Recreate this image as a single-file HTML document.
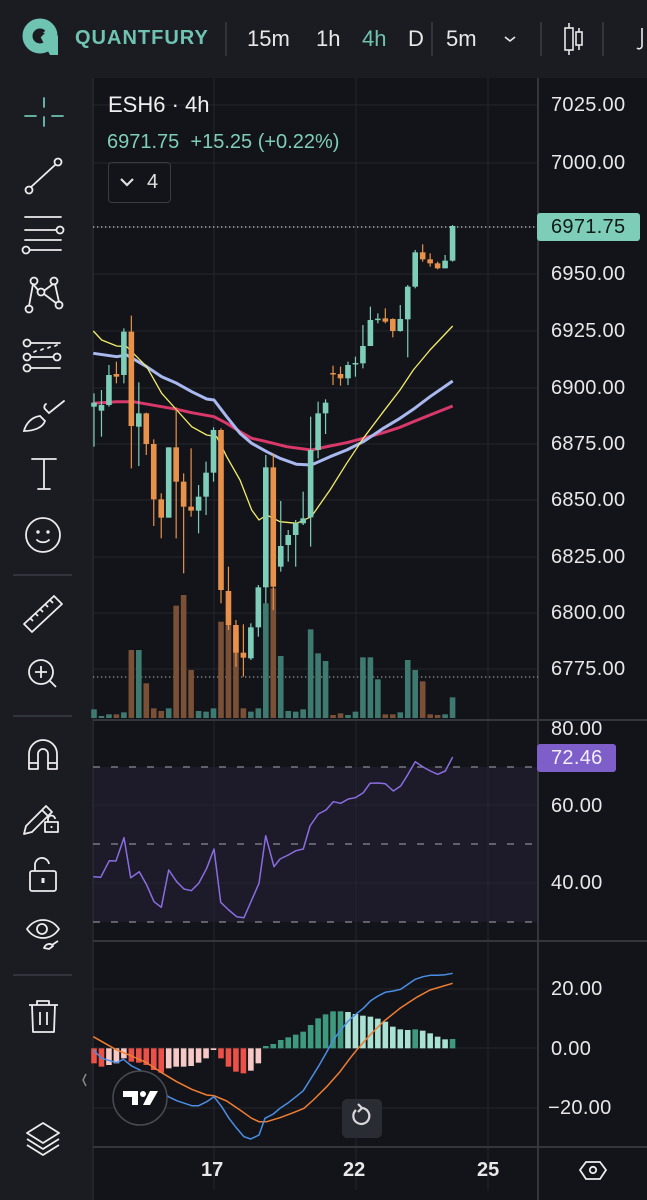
<!DOCTYPE html>
<html><head><meta charset="utf-8"><style>
*{margin:0;padding:0;box-sizing:border-box}
body{width:647px;height:1200px;background:#131419;overflow:hidden;font-family:"Liberation Sans",sans-serif;color:#e8e8ea;position:relative}
.hdr{position:absolute;left:0;top:0;width:647px;height:78px;background:#1b1c22}
.tb{position:absolute;left:0;top:78px;width:92px;height:1122px;background:#1b1c22}
.t{position:absolute;white-space:nowrap}
.ax{font-size:20px;color:#e8e8ea;position:absolute;left:551px;letter-spacing:0.3px}
svg{position:absolute;left:0;top:0}
</style></head><body>
<div class="hdr"></div>
<div class="tb"></div>
<svg id="s" width="647" height="1200" viewBox="0 0 647 1200"></svg>
<div class="t" style="left:75px;top:27px;font-size:20px;font-weight:bold;color:#6fc3b1;letter-spacing:1px">QUANTFURY</div>
<div class="t" style="left:247px;top:26px;font-size:22px;color:#e8e8ea">15m</div>
<div class="t" style="left:316px;top:26px;font-size:22px;color:#e8e8ea">1h</div>
<div class="t" style="left:362px;top:26px;font-size:22px;color:#6fc3b1">4h</div>
<div class="t" style="left:408px;top:26px;font-size:22px;color:#e8e8ea">D</div>
<div class="t" style="left:446px;top:26px;font-size:22px;color:#e8e8ea">5m</div>
<div class="t" style="left:108px;top:92px;font-size:22px;color:#f0f0f2">ESH6 · 4h</div>
<div class="t" style="left:107px;top:131px;font-size:20px;color:#7ecdb9">6971.75 &nbsp;+15.25 (+0.22%)</div>
<div class="t" style="left:108px;top:162px;width:63px;height:41px;border:1px solid #3a3c44;border-radius:4px"></div>
<div class="t" style="left:147px;top:171px;font-size:20px;color:#e0e0e2">4</div>
<div class="ax" style="top:94px">7025.00</div>
<div class="ax" style="top:152px">7000.00</div>
<div class="ax" style="top:263px">6950.00</div>
<div class="ax" style="top:320px">6925.00</div>
<div class="ax" style="top:377px">6900.00</div>
<div class="ax" style="top:433px">6875.00</div>
<div class="ax" style="top:489px">6850.00</div>
<div class="ax" style="top:546px">6825.00</div>
<div class="ax" style="top:602px">6800.00</div>
<div class="ax" style="top:658px">6775.00</div>
<div class="t" style="left:537px;top:213px;width:103px;height:28px;background:#7ecdb9;border-radius:3px;color:#0f1a17;font-size:20px;padding:3px 0 0 14px;letter-spacing:0.3px">6971.75</div>
<div class="ax" style="top:718px">80.00</div>
<div class="t" style="left:537px;top:744px;width:79px;height:28px;background:#7e5fc9;border-radius:3px;color:#f2eefa;font-size:20px;padding:3px 0 0 14px;letter-spacing:0.3px">72.46</div>
<div class="ax" style="top:795px">60.00</div>
<div class="ax" style="top:872px">40.00</div>
<div class="ax" style="top:978px">20.00</div>
<div class="ax" style="top:1038px">0.00</div>
<div class="ax" style="top:1097px;left:548px">−20.00</div>
<div class="t" style="left:201px;top:1159px;font-size:20px;font-weight:bold">17</div>
<div class="t" style="left:343px;top:1159px;font-size:20px;font-weight:bold">22</div>
<div class="t" style="left:477px;top:1159px;font-size:20px;font-weight:bold">25</div>
<script>
const s=document.getElementById('s');let h='';
const X0=80,Y0=220;
h+='<rect x="93" y="78" width="445" height="1069" fill="#131419"/>';
h+='<rect x="93" y="767" width="445" height="155" fill="#1d1a2a"/>';
const gl=[105,163,227,274,331,388,444,500,557,613,669,805,883,989,1048,1108];
gl.forEach(y=>h+=`<line x1="93" x2="538" y1="${y}" y2="${y}" stroke="#24262d" stroke-width="1"/>`);
[214,356,488].forEach(x=>h+=`<line x1="${x}" x2="${x}" y1="78" y2="1190" stroke="#24262d"/>`);
h+='<line x1="93" x2="647" y1="720" y2="720" stroke="#34363d" stroke-width="2"/>';
h+='<line x1="93" x2="647" y1="941" y2="941" stroke="#34363d" stroke-width="2"/>';
h+='<line x1="93" x2="647" y1="1147" y2="1147" stroke="#34363d" stroke-width="2"/>';
h+='<line x1="538" x2="538" y1="78" y2="1200" stroke="#34363d" stroke-width="2"/>';
h+='<line x1="93" x2="93" y1="78" y2="1200" stroke="#34363d" stroke-width="1"/>';
[767,844,922].forEach(y=>h+=`<line x1="93" x2="538" y1="${y}" y2="${y}" stroke="#8a8a94" stroke-width="1.3" stroke-dasharray="7,11"/>`);
h+='<line x1="93" x2="538" y1="227" y2="227" stroke="#c8c8cc" stroke-width="1.3" stroke-dasharray="1.3,2.7"/>';
h+='<line x1="93" x2="538" y1="677" y2="677" stroke="#9a9aa0" stroke-width="1.3" stroke-dasharray="1.3,2.7"/>';
const G='#7ecdb9',O='#e8914a';
const xs=i=>94+i*7.47;
const vol=[[1468,'g'],[1488,'g'],[1483,'g'],[1483,'o'],[1477,'g'],[1290,'o'],[1290,'g'],[1390,'o'],[1465,'o'],[1473,'o'],[1465,'g'],[1157,'o'],[1125,'o'],[1350,'o'],[1473,'g'],[1475,'g'],[1465,'g'],[1205,'o'],[1213,'o'],[1238,'o'],[1465,'o'],[1475,'g'],[1465,'g'],[1150,'g'],[1105,'o'],[1308,'g'],[1473,'g'],[1475,'g'],[1468,'g'],[1228,'g'],[1300,'g'],[1323,'g'],[1485,'o'],[1480,'o'],[1485,'g'],[1475,'g'],[1312,'g'],[1312,'g'],[1378,'g'],[1483,'o'],[1483,'o'],[1477,'g'],[1320,'g'],[1350,'g'],[1384,'o'],[1483,'o'],[1485,'o'],[1483,'g'],[1432,'g']];
vol.forEach((v,i)=>{const y=Y0+v[0]/3;h+=`<rect x="${xs(i)-2.8}" y="${y}" width="5.6" height="${718-y}" fill="${v[1]=='g'?'#3f7a70':'#7a5036'}"/>`});
const pl=(pts,c,w,ox,oy)=>'<polyline fill="none" stroke="'+c+'" stroke-width="'+w+'" stroke-linejoin="round" points="'+pts.map(p=>(ox+p[0]/3).toFixed(1)+','+(oy+p[1]/3).toFixed(1)).join(' ')+'"/>';
h+=pl([[40,550],[110,545],[160,545],[245,560],[290,568],[335,578],[402,590],[440,610],[480,635],[515,655],[560,665],[620,680],[694,690],[750,678],[800,668],[850,655],[910,638],[960,622],[1000,605],[1050,585],[1118,558]],'#d8386a',3,X0,Y0);
h+=pl([[40,400],[110,410],[140,405],[200,440],[245,470],[290,490],[335,515],[380,537],[402,540],[440,590],[480,640],[515,670],[560,695],[600,715],[650,733],[694,735],[750,710],[800,690],[850,665],[910,625],[960,595],[1000,568],[1050,530],[1118,483]],'#a9b9f0',3,X0,Y0);
h+=pl([[40,333],[65,360],[110,378],[140,380],[200,440],[245,520],[290,570],[335,620],[380,645],[410,650],[440,710],[480,780],[515,870],[537,900],[560,885],[600,905],[650,910],[694,890],[750,810],[800,730],[850,655],[910,575],[960,510],[1000,450],[1050,390],[1118,318]],'#f2ec6a',1.3,X0,Y0);
const c=[['g',548,560,520,680],['g',555,572,510,650],['g',465,555,435,560],['o',462,470,425,490],['g',335,465,325,490],['o',335,618,287,745],['g',580,620,487,738],['o',580,672,578,705],['o',672,838,658,918],['o',838,893,820,955],['g',682,893,682,893],['o',682,785,562,955],['o',785,860,760,1060],['o',860,872,685,890],['g',830,872,795,940],['g',758,830,725,885],['g',630,758,622,785],['o',630,1110,625,1150],['o',1113,1215,1040,1230],['o',1215,1298,1200,1340],['o',1298,1313,1213,1370],['g',1222,1315,1210,1320],['g',1102,1222,1095,1250],['g',742,1102,705,1150],['o',742,1100,700,1170],['g',978,1040,843,1055],['g',945,975,930,1025],['g',910,945,900,1040],['g',895,910,815,915],['g',690,892,590,980],['g',580,690,545,715],['g',548,580,538,642],['o',459,463,437,495],['o',462,475,440,497],['g',435,475,425,495],['g',429,433,410,470],['g',378,430,315,445],['g',300,378,260,378],['g',296,300,280,310],['o',295,305,265,310],['o',297,333,295,352],['g',297,333,255,335],['g',200,298,195,412],['g',97,200,90,205],['o',97,118,73,125],['o',118,130,100,140],['o',130,145,125,148],['g',122,145,105,145],['g',18,122,15,125]];
c.forEach((k,i)=>{const x=xs(i),col=k[0]=='g'?G:O;h+=`<line x1="${x}" x2="${x}" y1="${Y0+k[3]/3}" y2="${Y0+k[4]/3}" stroke="${col}" stroke-width="1.2"/>`;const t=Y0+k[1]/3,b=Y0+k[2]/3;h+=`<rect x="${x-2.8}" y="${t}" width="5.6" height="${Math.max(1.5,b-t)}" fill="${col}"/>`});
h+=pl([[40,485],[62,487],[88,437],[108,438],[132,368],[152,488],[178,470],[200,510],[222,560],[244,577],[266,465],[290,500],[312,522],[334,527],[356,505],[380,460],[402,402],[422,562],[446,585],[470,605],[492,608],[515,555],[537,505],[557,362],[582,455],[600,432],[625,420],[648,407],[670,402],[690,333],[715,297],[738,285],[760,260],[782,265],[805,252],[826,248],[850,233],[870,205],[894,204],[916,206],[940,228],[962,213],[984,178],[1006,140],[1029,156],[1051,168],[1073,178],[1096,168],[1118,126]],'#8a6ee0',1.5,X0,715);
const mh=[[370,'r'],[380,'r'],[375,'p'],[370,'p'],[355,'p'],[365,'r'],[368,'r'],[375,'r'],[390,'r'],[398,'r'],[385,'p'],[380,'p'],[380,'p'],[378,'p'],[368,'p'],[355,'p'],[330,'p'],[355,'r'],[380,'r'],[395,'r'],[400,'r'],[392,'p'],[370,'p'],[318,'g'],[312,'g'],[300,'g'],[292,'g'],[284,'g'],[275,'g'],[255,'g'],[235,'g'],[223,'g'],[214,'g'],[214,'g'],[216,'l'],[222,'l'],[227,'l'],[230,'l'],[236,'l'],[245,'l'],[260,'l'],[268,'l'],[270,'l'],[268,'g'],[272,'l'],[280,'l'],[290,'l'],[298,'l'],[297,'g']];
const mc={r:'#ec5148',p:'#f6c9c6',g:'#3e9a7f',l:'#a9e2d2'};
mh.forEach((m,i)=>{const y=940+m[0]/3,z=940+325/3;const t=Math.min(y,z),hh=Math.abs(y-z);h+=`<rect x="${xs(i)-2.8}" y="${t}" width="5.6" height="${hh}" fill="${mc[m[1]]}"/>`});
h+=pl([[40,290],[80,313],[110,330],[155,348],[200,368],[245,398],[290,425],[335,448],[380,465],[402,467],[440,483],[480,510],[515,535],[537,545],[560,545],[600,533],[640,518],[672,505],[700,480],[740,440],[780,395],[810,355],[830,330],[870,285],[910,245],[960,205],[1010,172],[1050,150],[1118,130]],'#f07e32',1.5,X0,940);
h+=pl([[40,330],[65,355],[110,368],[130,358],[155,378],[180,390],[220,425],[265,470],[290,482],[335,497],[356,497],[380,485],[402,470],[425,500],[447,535],[470,565],[492,590],[512,597],[537,585],[555,535],[580,522],[600,505],[625,488],[648,470],[670,452],[690,420],[715,380],[738,340],[760,300],[782,270],[805,243],[827,223],[850,205],[872,182],[894,168],[916,157],[940,153],[962,148],[984,133],[1006,118],[1029,110],[1051,106],[1073,106],[1096,104],[1118,100]],'#4a8ee6',1.5,X0,940);
h+='<circle cx="140" cy="1098" r="27" fill="#131419" stroke="#4a4c54" stroke-width="1.5"/>';
h+='<rect x="123" y="1091" width="15" height="6" fill="#fff"/><rect x="132" y="1091" width="6" height="14" fill="#fff"/><circle cx="143" cy="1094" r="3" fill="#fff"/><path d="M150 1091h8l-8 14h-7z" fill="#fff"/>';
h+='<rect x="342" y="1099" width="40" height="39" rx="5" fill="#2a2c33"/>';
h+='<path d="M356 1110 A8 8 0 1 0 362 1108" fill="none" stroke="#d8d8dc" stroke-width="2.2"/><path d="M358 1104l4 4-4 4" fill="none" stroke="#d8d8dc" stroke-width="2.2"/>';
h+='<circle cx="40" cy="36" r="12.5" fill="none" stroke="#6fc3b1" stroke-width="10"/><path d="M40 36L48 28L58 36L58 55L50 55z" fill="#6fc3b1"/><path d="M33 33h12l-6 6z" fill="#1b1c22"/>';
h+='<line x1="226" x2="226" y1="22" y2="56" stroke="#3a3c44" stroke-width="1.5"/><line x1="432" x2="432" y1="22" y2="56" stroke="#3a3c44" stroke-width="1.5"/><line x1="541" x2="541" y1="22" y2="56" stroke="#3a3c44" stroke-width="1.5"/><line x1="603" x2="603" y1="22" y2="56" stroke="#3a3c44" stroke-width="1.5"/>';
h+='<path d="M505 37l5 4 5-4" fill="none" stroke="#e8e8ea" stroke-width="1.6"/>';
h+='<g fill="none" stroke="#e8e8ea" stroke-width="1.6"><line x1="569" x2="569" y1="23" y2="55"/><rect x="565" y="28" width="8" height="22" fill="#1b1c22"/><line x1="579" x2="579" y1="28" y2="50"/><rect x="576" y="32" width="6" height="13" fill="#1b1c22"/></g>';
h+='<path d="M642 28v18a3 3 0 0 1-5 2" fill="none" stroke="#e8e8ea" stroke-width="1.6"/>';
h+='<path d="M121 179l6 6 6-6" fill="none" stroke="#e0e0e2" stroke-width="2.2"/>';
const W='#ececee';
let ic='<g fill="none" stroke="'+W+'" stroke-width="1.8" stroke-linecap="round">';
ic+='<g stroke="#6fc3b1"><line x1="44" y1="98" x2="44" y2="107"/><line x1="44" y1="117" x2="44" y2="126"/><line x1="25" y1="116" x2="36" y2="116"/><line x1="52" y1="116" x2="63" y2="116"/></g>';
ic+='<circle cx="58" cy="162" r="3.5"/><circle cx="29" cy="190" r="3.5"/><line x1="31" y1="187" x2="55" y2="165"/>';
ic+='<line x1="25" y1="217" x2="61" y2="217"/><line x1="25" y1="230" x2="56" y2="230"/><circle cx="60" cy="230" r="3.5"/><line x1="25" y1="240" x2="61" y2="240"/><line x1="30" y1="250" x2="61" y2="250"/><circle cx="26" cy="250" r="3.5"/>';
ic+='<circle cx="34" cy="281" r="3.5"/><circle cx="54" cy="281" r="3.5"/><circle cx="41" cy="292" r="3.5"/><circle cx="29" cy="309" r="3.5"/><circle cx="59" cy="305" r="3.5"/><path d="M33 284l-4 22M38 290l-5-6M45 290l8-6M55 284l4 18M44 294l12 9"/>';
ic+='<circle cx="27" cy="343" r="3.5"/><line x1="31" y1="343" x2="60" y2="343"/><circle cx="27" cy="357" r="3.5"/><line x1="31" y1="357" x2="53" y2="357"/><circle cx="57" cy="357" r="3.5"/><circle cx="27" cy="368" r="3.5"/><line x1="31" y1="368" x2="60" y2="368"/><path d="M34 352l2-1M41 350l2-1M48 348l2-1M55 346l2-1" />';
ic+='<path d="M24 431c2-8 8-14 16-15l5 5c-2 6-10 10-21 10z"/><path d="M46 404c-2 1-2 4-1 5l4 4 15-12"/>';
ic+='<path d="M32 459h24M44 459v30M38 489h12"/>';
ic+='<circle cx="43" cy="535" r="17"/><circle cx="38" cy="532" r="0.8"/><circle cx="48" cy="532" r="0.8"/><path d="M37 540c3 3 9 3 12 0"/>';
ic+='</g>';
ic+='<g stroke="#3a3c44" stroke-width="1.5"><line x1="13" x2="72" y1="575" y2="575"/><line x1="13" x2="72" y1="716" y2="716"/><line x1="13" x2="72" y1="975" y2="975"/></g>';
ic+='<g fill="none" stroke="'+W+'" stroke-width="1.8" stroke-linejoin="round">';
ic+='<path d="M24 624l30-28 8 8-30 28z M30 618l3 3M35 613l3 3M40 609l3 3M45 604l3 3M50 600l3 3"/>';
ic+='<circle cx="41" cy="672" r="12"/><path d="M41 666v12M35 672h12M50 681l6 6"/>';
ic+='<path d="M29 769v-15a14 14 0 0 1 28 0v15h-9v-15a5 5 0 0 0-10 0v15z M29 763h9M48 763h9"/>';
ic+='<path d="M26 826l20-20 6 6-20 20-8 2z M42 810l6 6"/><rect x="45" y="822" width="13" height="10"/><path d="M48 822v-3a3.5 3.5 0 0 1 7 0"/><line x1="51.5" y1="826" x2="51.5" y2="828"/>';
ic+='<rect x="30" y="871" width="26" height="20" rx="2"/><path d="M35 871v-5a7 7 0 0 1 14-2"/><line x1="43" y1="878" x2="43" y2="883" stroke-width="3"/>';
ic+='<path d="M27 929c8-12 24-12 32 0c-8 12-24 12-32 0z"/><circle cx="42" cy="929" r="5"/><path d="M44 948c2-5 7-5 9-2l-4 3z M52 945l6-4"/>';
ic+='<path d="M29 1005h29M37 1005v-4h12v4M32 1005l1 27h21l1-27M40 1012v13M47 1012v13"/>';
ic+='<path d="M86 1074l-3 6 3 6" stroke="#888" stroke-width="1.5"/>';
ic+='<path d="M43 1123l16 10-16 10-16-10z M27 1139l16 10 16-10 M27 1145l16 10 16-10"/>';
ic+='</g>';
ic+='<path d="M586 1162h14l6 8-6 9h-14l-6-9z" fill="none" stroke="'+W+'" stroke-width="1.8"/><circle cx="593" cy="1170" r="3.2" fill="none" stroke="'+W+'" stroke-width="1.8"/>';
h+=ic;
s.innerHTML=h;
</script>
</body></html>
